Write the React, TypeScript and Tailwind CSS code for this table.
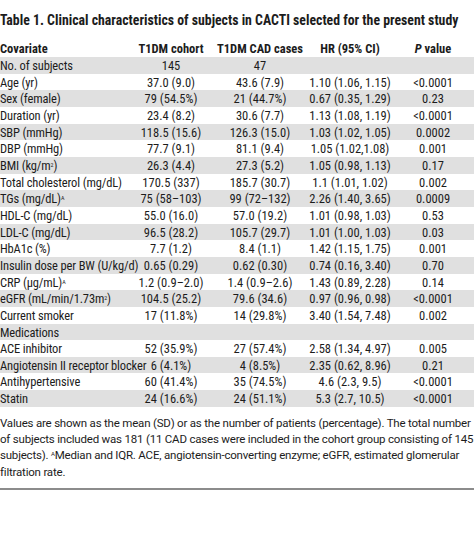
import React from "react";

type Row = { label: React.ReactNode; cohort?: string; cad?: string; hr?: string; p?: string };

const rows: Row[] = [
  { label: "No. of subjects", cohort: "145", cad: "47" },
  { label: "Age (yr)", cohort: "37.0 (9.0)", cad: "43.6 (7.9)", hr: "1.10 (1.06, 1.15)", p: "<0.0001" },
  { label: "Sex (female)", cohort: "79 (54.5%)", cad: "21 (44.7%)", hr: "0.67 (0.35, 1.29)", p: "0.23" },
  { label: "Duration (yr)", cohort: "23.4 (8.2)", cad: "30.6 (7.7)", hr: "1.13 (1.08, 1.19)", p: "<0.0001" },
  { label: "SBP (mmHg)", cohort: "118.5 (15.6)", cad: "126.3 (15.0)", hr: "1.03 (1.02, 1.05)", p: "0.0002" },
  { label: "DBP (mmHg)", cohort: "77.7 (9.1)", cad: "81.1 (9.4)", hr: "1.05 (1.02,1.08)", p: "0.001" },
  {
    label: (
      <>
        BMI (kg/m<sup className="text-[6px]">2</sup>)
      </>
    ),
    cohort: "26.3 (4.4)",
    cad: "27.3 (5.2)",
    hr: "1.05 (0.98, 1.13)",
    p: "0.17",
  },
  { label: "Total cholesterol (mg/dL)", cohort: "170.5 (337)", cad: "185.7 (30.7)", hr: "1.1 (1.01, 1.02)", p: "0.002" },
  {
    label: (
      <>
        TGs (mg/dL)<sup className="text-[6px]">A</sup>
      </>
    ),
    cohort: "75 (58–103)",
    cad: "99 (72–132)",
    hr: "2.26 (1.40, 3.65)",
    p: "0.0009",
  },
  { label: "HDL-C (mg/dL)", cohort: "55.0 (16.0)", cad: "57.0 (19.2)", hr: "1.01 (0.98, 1.03)", p: "0.53" },
  { label: "LDL-C (mg/dL)", cohort: "96.5 (28.2)", cad: "105.7 (29.7)", hr: "1.01 (1.00, 1.03)", p: "0.03" },
  { label: "HbA1c (%)", cohort: "7.7 (1.2)", cad: "8.4 (1.1)", hr: "1.42 (1.15, 1.75)", p: "0.001" },
  { label: "Insulin dose per BW (U/kg/d)", cohort: "0.65 (0.29)", cad: "0.62 (0.30)", hr: "0.74 (0.16, 3.40)", p: "0.70" },
  {
    label: (
      <>
        CRP (μg/mL)<sup className="text-[6px]">A</sup>
      </>
    ),
    cohort: "1.2 (0.9–2.0)",
    cad: "1.4 (0.9–2.6)",
    hr: "1.43 (0.89, 2.28)",
    p: "0.14",
  },
  {
    label: (
      <>
        eGFR (mL/min/1.73m<sup className="text-[6px]">2</sup>)
      </>
    ),
    cohort: "104.5 (25.2)",
    cad: "79.6 (34.6)",
    hr: "0.97 (0.96, 0.98)",
    p: "<0.0001",
  },
  { label: "Current smoker", cohort: "17 (11.8%)", cad: "14 (29.8%)", hr: "3.40 (1.54, 7.48)", p: "0.002" },
  { label: "Medications" },
  { label: "ACE inhibitor", cohort: "52 (35.9%)", cad: "27 (57.4%)", hr: "2.58 (1.34, 4.97)", p: "0.005" },
  { label: "Angiotensin II receptor blocker", cohort: "6 (4.1%)", cad: "4 (8.5%)", hr: "2.35 (0.62, 8.96)", p: "0.21" },
  { label: "Antihypertensive", cohort: "60 (41.4%)", cad: "35 (74.5%)", hr: "4.6 (2.3, 9.5)", p: "<0.0001" },
  { label: "Statin", cohort: "24 (16.6%)", cad: "24 (51.1%)", hr: "5.3 (2.7, 10.5)", p: "<0.0001" },
];

const grid = "grid grid-cols-[130px_82px_96px_84px_1fr] items-center whitespace-nowrap";

export default function App() {
  return (
    <div className="w-[474px] h-[535px] bg-white text-[#1c1c1c] overflow-hidden">
      {/* Title */}
      <div className="pt-[12px] h-[40px] font-['Roboto_Condensed','Roboto',sans-serif] font-stretch-[75%] font-bold text-[13.8px] leading-[17px] whitespace-nowrap">
        Table 1. Clinical characteristics of subjects in CACTI selected for the present study
      </div>

      {/* Table */}
      <div className="font-['Roboto_Condensed','Roboto',sans-serif] font-stretch-[75%] text-[12.5px]">
        <div className={`${grid} h-[17px] font-bold`}>
          <div>Covariate</div>
          <div className="text-center">T1DM cohort</div>
          <div className="text-center">T1DM CAD cases</div>
          <div className="text-center">HR (95% CI)</div>
          <div className="text-center">
            <i>P</i> value
          </div>
        </div>
        {rows.map((r, i) => (
          <div key={i} className={`${grid} h-[16.67px] ${i % 2 === 0 ? "bg-[#e0e0e0]" : ""}`}>
            <div className="tracking-[-0.15px]">{r.label}</div>
            <div className="text-center">{r.cohort}</div>
            <div className="text-center">{r.cad}</div>
            <div className="text-center">{r.hr}</div>
            <div className="text-center">{r.p}</div>
          </div>
        ))}
      </div>

      {/* Footnote */}
      <p className="mt-[8px] pb-[8px] font-['Roboto',sans-serif] text-[11.5px] leading-[16.3px] tracking-[-0.2px] whitespace-nowrap border-b-2 border-[#8c8c8c]">
        Values are shown as the mean (SD) or as the number of patients (percentage). The total number
        <br />
        of subjects included was 181 (11 CAD cases were included in the cohort group consisting of 145
        <br />
        subjects). <sup className="text-[6px]">A</sup>Median and IQR. ACE, angiotensin-converting enzyme; eGFR,
        estimated glomerular
        <br />
        filtration rate.
      </p>
    </div>
  );
}
